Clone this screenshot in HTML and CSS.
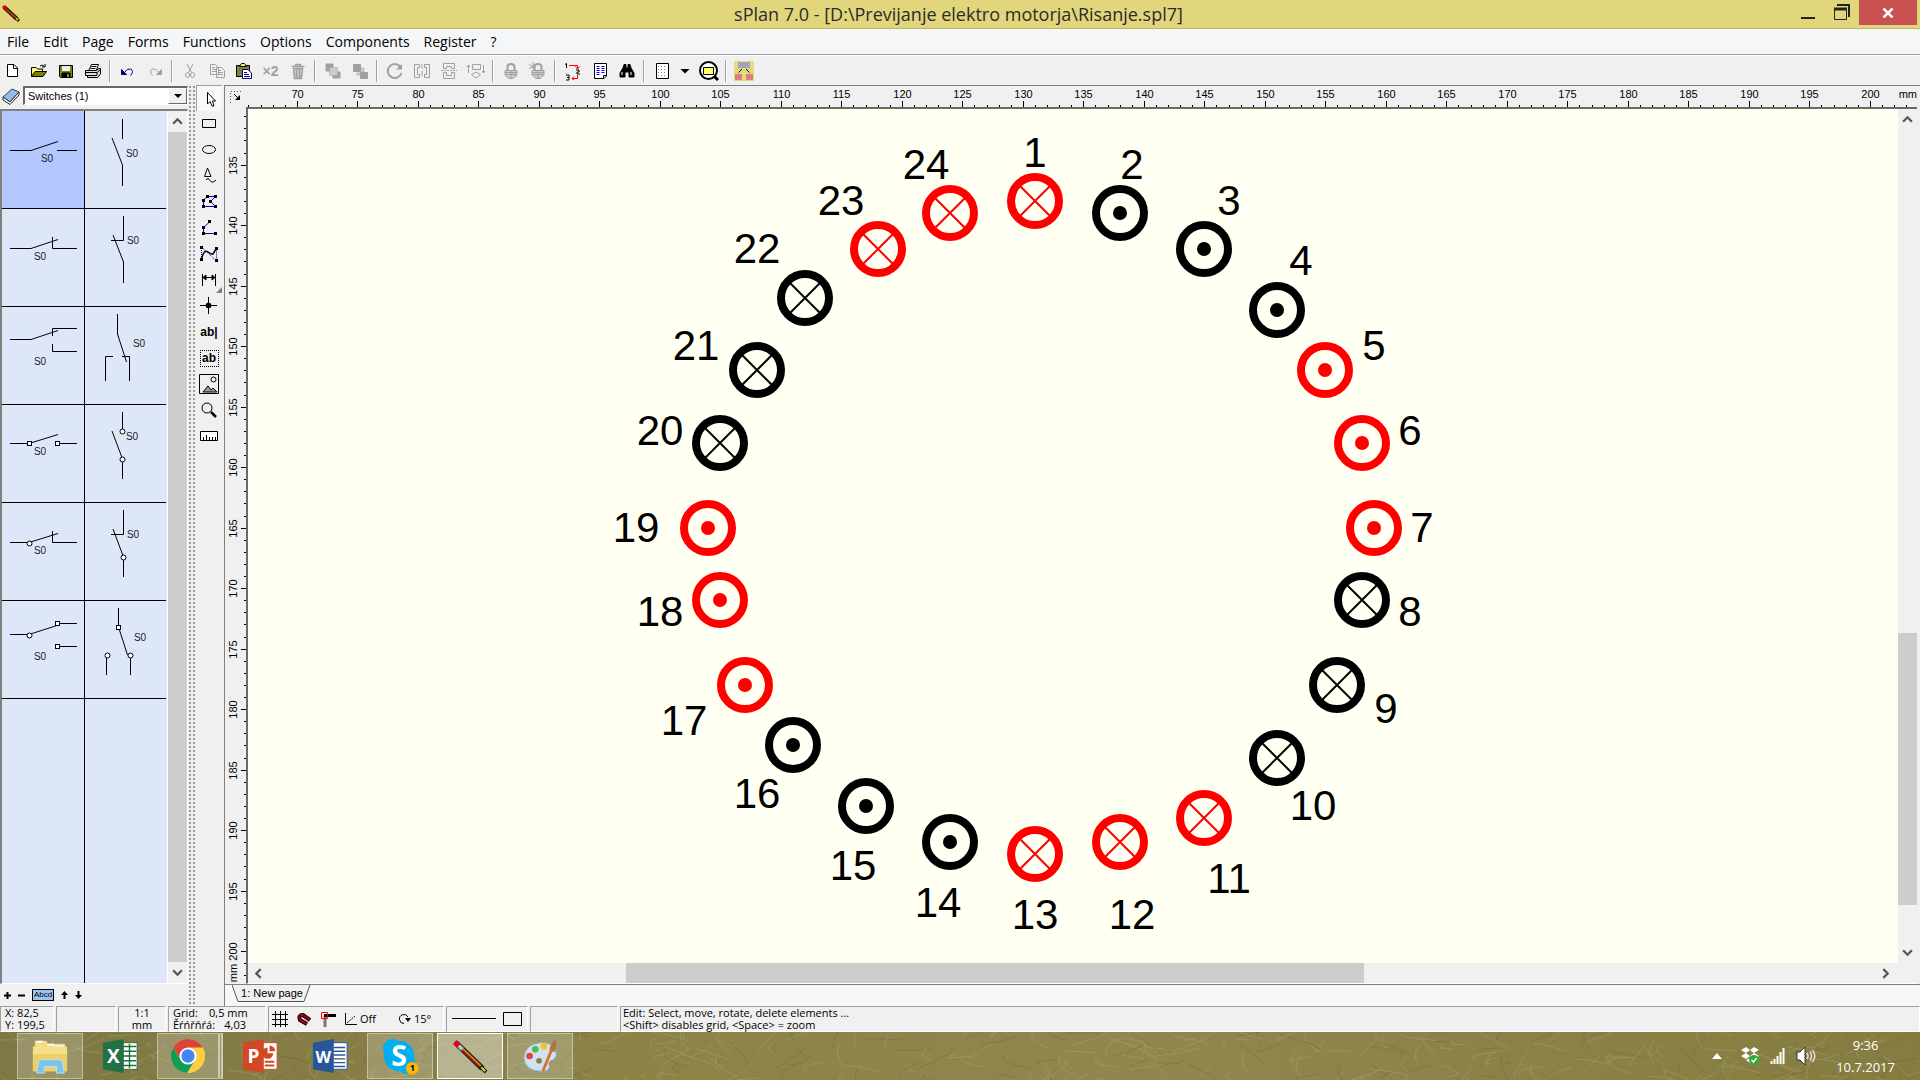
FILE: index.html
```html
<!DOCTYPE html>
<html lang="en">
<head>
    <meta charset="UTF-8">
    <meta name="viewport" content="width=device-width, initial-scale=1.0">
    <link rel="stylesheet" href="styles.css">
    <title>sPlan 7.0</title>
</head>
<body>
    <header class="titlebar">
        <svg class="app-icon" width="20" height="20" viewBox="0 0 20 20"><path d="M2 3L15 15" stroke="#200" stroke-width="4"/><path d="M4 5L14 14" stroke="#a8430c" stroke-width="2"/><path d="M1 2l3 3" stroke="#e00" stroke-width="3"/><path d="M14 14l3 3" stroke="#220" stroke-width="3"/><path d="M14 14l2 2" stroke="#dd0" stroke-width="1.500"/></svg>
        <h1>sPlan 7.0 - [D:\Previjanje elektro motorja\Risanje.spl7]</h1>
        <div class="window-buttons">
            <button class="win-btn" aria-label="Minimize"><svg width="16" height="16"><path d="M1 14H15" stroke="#222" stroke-width="2"/></svg></button>
            <button class="win-btn" aria-label="Restore"><svg width="16" height="16" fill="none" stroke="#222"><path d="M3 1H15V13" stroke-width="2"/><path d="M.5 4V15.500H12.500V4" /><path d="M0 5H13" stroke-width="3"/></svg></button>
            <button class="win-btn close" aria-label="Close"><svg width="12" height="10"><path d="M1.500 .5L10.500 9.500M10.500 .5L1.500 9.500" stroke="#fff" stroke-width="2.500"/></svg></button>
        </div>
    </header>

    <nav class="menubar">
        <a href="#">File</a><a href="#">Edit</a><a href="#">Page</a><a href="#">Forms</a><a href="#">Functions</a><a href="#">Options</a><a href="#">Components</a><a href="#">Register</a><a href="#">?</a>
    </nav>

    <div class="toolbar">
        <button aria-label="New"><svg viewBox="0 0 20 20"><path d="M5.500 3.500H12L15.500 7V15.500H5.500Z" fill="#fff"/><path d="M11.500 3.500V7.500H15.500"/></svg></button>
        <button aria-label="Open"><svg viewBox="0 0 20 20"><path d="M2.500 15.500V6.500H7L8.500 8H13.500V10.500" fill="#ffff70"/><path d="M2.500 15.500L6 10.500H17.500L14 15.500Z" fill="#808000"/><path d="M11 5Q13 3 15.500 5.500M16 3V6H13"/></svg></button>
        <button aria-label="Save"><svg viewBox="0 0 20 20"><path d="M3.500 4.500H16.500V16.500H4.500L3.500 15.500Z" fill="#808000"/><rect x="6" y="5" width="8" height="5" fill="#eee" stroke="none"/><path d="M6 12H14V16H6Z" fill="#000"/><path d="M12 13V16" stroke="#fff"/></svg></button>
        <button aria-label="Print"><svg viewBox="0 0 20 20"><path d="M6 9L8.500 3.500H15.500L13.500 9" fill="#fff"/><path d="M8.500 5.500H13.500M7.500 7.500H12.500"/><path d="M2.500 9.500H13L16 7.500H17.500V13L14.500 16.500H4.500V14.500H2.500Z" fill="#ddd"/><path d="M2.500 11.500H14V14.500H3M14 11.500L17.500 8.500M6 16.500H13" /></svg></button>
        <hr>
        <button aria-label="Undo"><svg class="navy" viewBox="0 0 20 20"><path d="M6 12Q9 7 12.500 8Q16.500 10 12.500 14.500"/><path d="M3.500 8.500V13.500H8.500Z" fill="#000080"/></svg></button>
        <button aria-label="Redo"><svg class="off" viewBox="0 0 20 20"><path d="M14 12Q11 7 7.500 8Q3.500 10 7.500 14.500"/><path d="M16.500 8.500V13.500H11.500Z" fill="#a0a0a0"/></svg></button>
        <hr>
        <button aria-label="Cut"><svg class="off" viewBox="0 0 20 20"><path d="M7 3L11.500 11.500M13 3L8.500 11.500"/><ellipse cx="7.500" cy="14" rx="2" ry="2.500"/><ellipse cx="12.500" cy="14" rx="2" ry="2.500"/></svg></button>
        <button aria-label="Copy"><svg class="off" viewBox="0 0 20 20"><path d="M3.500 3.500H8.500L11.500 6.500V13.500H3.500ZM9.500 6.500H14.500L17.500 9.500V16.500H9.500Z" fill="#f0f0f0"/><path d="M5 6.500H8M5 8.500H9M5 10.500H9M11 9.500H14M11 11.500H16M11 13.500H16"/></svg></button>
        <button aria-label="Paste"><svg viewBox="0 0 20 20"><path d="M2.500 4.500H15.500V15.500H2.500Z" fill="#808040"/><path d="M5.500 5.500L7.500 2.500H10.500L12.500 5.500Z" fill="#ffff70"/><path d="M8.500 8.500H14L17.500 12V17.500H8.500Z" fill="#fff" stroke="#000080"/><path d="M10 11.500H13M10 13.500H15M10 15.500H16" stroke="#000080"/></svg></button>
        <button class="times">×2</button>
        <button aria-label="Delete"><svg class="off" viewBox="0 0 20 20"><path d="M3.500 5.500H16.500M7.500 5V3.500H12.500V5M5.500 7.500H14.500L13.500 17.500H6.500Z" fill="#ddd" stroke-width="1.500"/><path d="M8.500 8V17M11.500 8V17" stroke-width="2"/></svg></button>
        <hr>
        <button aria-label="To front"><svg class="off" viewBox="0 0 20 20"><path d="M3 3h7v7h-7zM10 11h7v6h-7z" fill="#a0a0a0"/><path d="M6.500 6.500h8v8h-8z" fill="#ccc" stroke-dasharray="1"/></svg></button>
        <button aria-label="To back"><svg class="off" viewBox="0 0 20 20"><path d="M7 7h7v7h-7z" fill="#ccc" stroke-dasharray="1"/><path d="M3.500 3.500h7v7h-7zM10.500 11.500h7v6h-7z" fill="#a0a0a0"/></svg></button>
        <hr>
        <button aria-label="Rotate"><svg class="off" viewBox="0 0 20 20"><path d="M15.500 6A7 7 0 1 0 16.500 12" stroke-width="2"/><path d="M17 3V8.500H11Z" fill="#a0a0a0" stroke="none"/></svg></button>
        <button aria-label="Mirror horizontally"><svg class="off" viewBox="0 0 20 20"><path d="M10 3V17" stroke-dasharray="5 2"/><path d="M2.500 3.500H7.500V6.500H5.500V13.500H7.500V16.500H2.500ZM17.500 3.500H12.500V6.500H14.500V13.500H12.500V16.500H17.500Z"/></svg></button>
        <button aria-label="Mirror vertically"><svg class="off" viewBox="0 0 20 20"><path d="M2 9.500H18" stroke-dasharray="2 1"/><path d="M4.500 7.500V2.500H15.500V7.500H12.500V5.500H7.500V7.500ZM4.500 11.500V17.500H15.500V11.500H12.500V14.500H7.500V11.500Z"/></svg></button>
        <button aria-label="Flip"><svg class="off" viewBox="0 0 20 20"><path d="M6.500 3.500H14.500V8.500H6.500ZM2.500 12V4M1 6L2.500 4L4 6M17.500 4V12M16 10L17.500 12L19 10M5.500 13.500L10 11L14.500 13.500L10 17Z"/></svg></button>
        <hr>
        <button aria-label="Lock"><svg class="off" viewBox="0 0 20 20"><path d="M6.500 9V6Q6.500 3 10 3T13.500 6V9" stroke-width="2"/><path d="M4 9.500H16V14L12 17.500H8L4 14Z" fill="#ccc"/><path d="M4 11.500H16M5 13.500H15M10 10V17"/></svg></button>
        <button aria-label="Unlock"><svg class="off" viewBox="0 0 20 20"><path d="M6.500 9V6Q6.500 3 10 3T13.500 6V9" stroke-width="2"/><path d="M4 9.500H16V14L12 17.500H8L4 14Z" fill="#ccc"/><path d="M4 11.500H16M5 13.500H15M10 10V17M1 3L8 9M1 8L8 3M5 1V8"/></svg></button>
        <hr>
        <button aria-label="Renumber"><svg viewBox="0 0 20 20"><path d="M6 4.500H14.500V7M14.500 14V17.500H9M12.500 5.500L14.500 8L16.500 5.500M11 15.500L9 17.500L11 19" stroke="#f00"/><path d="M2 3.500L3.500 2.500V7M13 9H16V11H14V13H17M3 14H6V19H3M4 16.500H6"/></svg></button>
        <button aria-label="Part list"><svg viewBox="0 0 20 20"><path d="M4.500 2.500H16.500V15L14 17.500H4.500Z" fill="#fff"/><path d="M13.500 17.500V14.500H16.500"/><path d="M6.500 5.500H9.500M6.500 7.500H9.500M6.500 9.500H9.500M6.500 11.500H9.500M6.500 13.500H9.500M11.500 5.500H14.500M11.500 7.500H14.500M11.500 9.500H14.500M11.500 11.500H14.500" stroke="#00f"/></svg></button>
        <button aria-label="Search"><svg viewBox="0 0 20 20"><path d="M7 3.500H9V7H11V3.500H13L14 7L17 12V16H12V11H8V16H3V12L6 7Z" fill="#000"/><path d="M5 11V14M14 11V14" stroke="#fff"/></svg></button>
        <hr>
        <button aria-label="Grid"><svg viewBox="0 0 20 20"><path d="M4.500 2.500H16.500V17.500H4.500Z" fill="#fff"/><path d="M6 5.500H15M6 8.500H15M6 11.500H15M6 14.500H15" stroke="#888" stroke-dasharray="1 2"/></svg></button>
        <button class="narrow" aria-label="Grid options"><svg viewBox="0 0 20 20"><path d="M5.500 8H14.500L10 12.500Z" fill="#000" stroke="none"/></svg></button>
        <button aria-label="Zoom to page"><svg viewBox="0 0 20 20"><circle cx="9.500" cy="9.500" r="8.500" fill="#fff" stroke-width="2"/><path d="M4.500 6.500H14.500V13.500H4.500Z" fill="#ffff60"/><path d="M15 15L19 19" stroke-width="3"/></svg></button>
        <hr>
        <button aria-label="Page tree"><svg viewBox="0 0 20 20"><path d="M0 0H20V20H0Z" fill="#e1dc7c" stroke="none"/><path d="M4 1H16V7H4Z" fill="#a3a2bf" stroke="none"/><path d="M1 13H8V19H1ZM12 13H19V19H12Z" fill="#df8080" stroke="none"/><path d="M8 8L4.500 11.500M12 8L15.500 11.500"/></svg></button>
    </div>

    <main class="workspace">
        <aside class="library">
            <div class="library-head">
                <svg width="18" height="18" viewBox="0 0 18 18"><path d="M1 10L10 2L17 5L8 15Z" fill="#91bce8" stroke="#345"/><path d="M1 10L8 15L17 5V8L8 17.500L1 13Z" fill="#fff" stroke="#222"/></svg>
                <label class="hidden-label" for="group">Library group</label>
                <select id="group"><option>Switches (1)</option></select>
                <span class="drop"></span>
            </div>
            <div class="library-body">
                <div class="parts" id="parts"></div>
                <div class="scroll vertical">
                    <svg class="arrow" viewBox="0 0 10 10"><path d="M1 7L5 3L9 7"/></svg>
                    <div class="thumb full"></div>
                    <svg class="arrow" viewBox="0 0 10 10"><path d="M1 3L5 7L9 3"/></svg>
                </div>
            </div>
            <div class="library-foot">
                <button aria-label="Add"><svg width="7" height="7"><path d="M3.500 0V7M0 3.500H7" stroke-width="2"/></svg></button>
                <button aria-label="Remove"><svg width="7" height="7"><path d="M0 3.500H7" stroke-width="2"/></svg></button>
                <button class="names">Abcd</button>
                <button aria-label="Up"><svg width="7" height="8"><path d="M3.500 3V8" stroke-width="2"/><path d="M0 4L3.500 0L7 4Z" fill="#000" stroke="none"/></svg></button>
                <button aria-label="Down"><svg width="7" height="8"><path d="M3.500 0V5" stroke-width="2"/><path d="M0 4L3.500 8L7 4Z" fill="#000" stroke="none"/></svg></button>
            </div>
        </aside>
        <div class="splitter"></div>
        <div class="tools">
            <button class="active" aria-label="Select"><svg viewBox="0 0 20 20"><path d="M7.500 3.500V15L10 12.500L12 17H14L12.500 12H15.500Z" fill="#fff"/></svg></button>
            <button aria-label="Rectangle"><svg viewBox="0 0 20 20"><path d="M3.500 5.500H16.500V13.500H3.500Z"/></svg></button>
            <button aria-label="Ellipse"><svg viewBox="0 0 20 20"><ellipse cx="10" cy="9.500" rx="6.500" ry="4"/></svg></button>
            <button aria-label="Special form"><svg viewBox="0 0 20 20"><path d="M5.500 10.500L8.500 2L12 10.500ZM7 14Q9 11 11 14.500T17 14"/></svg></button>
            <button aria-label="Polygon"><svg viewBox="0 0 20 20"><path d="M4.500 14.500V8L8.500 4.500H16.500L11.500 9.500L16.500 14.500Z" stroke="#00c"/><path d="M3 13h3v3h-3zM3 7h3v3h-3zM7 3h3v3h-3zM15 3h3v3h-3zM10 8h3v3h-3zM15 13h3v3h-3z" fill="#000" stroke="none"/></svg></button>
            <button aria-label="Line"><svg viewBox="0 0 20 20"><path d="M10.500 4L4.500 9.500V15.500H16.500" stroke="#00c"/><path d="M9 2h3v3h-3zM3 8h3v3h-3zM3 14h3v3h-3zM15 14h3v3h-3z" fill="#000" stroke="none"/></svg></button>
            <button aria-label="Bezier"><svg viewBox="0 0 20 20"><path d="M2.500 15V3L17.500 17V5" stroke="#00c" stroke-dasharray="1 1"/><path d="M2.500 15Q5 5 9 8T14 10L17 5" stroke-width="1.500"/><path d="M1 2h3v3h-3zM1 14h3v3h-3zM16 3h3v3h-3zM16 15h3v3h-3z" fill="#000" stroke="none"/></svg></button>
            <button aria-label="Dimension"><svg viewBox="0 0 20 20"><path d="M3.500 4V16M16.500 4V16M4 7.500H16"/><path d="M4 7.500L7 5V10ZM16 7.500L13 5V10Z" fill="#000"/></svg><i class="corner"></i></button>
            <button aria-label="Node"><svg viewBox="0 0 20 20"><path d="M9.500 1V18M1 9.500H18"/><circle cx="9.500" cy="9.500" r="2.500" fill="#000"/></svg></button>
            <button class="ab">ab|</button>
            <button class="ab"><span>ab</span></button>
            <button aria-label="Image"><svg viewBox="0 0 20 20"><path d="M.5 .5H19.500V19.500H.5Z"/><circle cx="14.500" cy="5.500" r="2.500"/><path d="M4 18L9 12L12 16L14 14L18 18Z" fill="#999"/></svg></button>
            <button aria-label="Zoom"><svg viewBox="0 0 20 20"><circle cx="8" cy="8" r="5" fill="#eee"/><path d="M12 12L17 17" stroke-width="2.500"/></svg></button>
            <button aria-label="Measure"><svg viewBox="0 0 20 20"><path d="M1.500 5.500H18.500V14.500H1.500Z" fill="#fff"/><path d="M4.500 11V14M7.500 9V14M10.500 11V14M13.500 11V14M16.500 11V14"/></svg></button>
        </div>
        <section class="drawing">
            <div class="sheet">
                <div class="origin"><svg width="14" height="14"><path d="M.5 12V.5H13" fill="none" stroke="#555" stroke-dasharray="1 2"/><path d="M4 3L9 8" stroke="#000"/><path d="M10 4V9H5Z" /></svg></div>
                <svg class="ruler-x" id="rulerX"></svg>
                <svg class="ruler-y" id="rulerY"></svg>
                <div class="view">
                    <svg class="canvas" id="canvas"></svg>
                    <div class="scroll vertical">
                        <svg class="arrow" viewBox="0 0 10 10"><path d="M1 7L5 3L9 7"/></svg>
                        <div class="track"><div class="space-v"></div><div class="thumb page-v"></div></div>
                        <svg class="arrow" viewBox="0 0 10 10"><path d="M1 3L5 7L9 3"/></svg>
                    </div>
                    <div class="scroll horizontal">
                        <svg class="arrow" viewBox="0 0 10 10"><path d="M7 1L3 5L7 9"/></svg>
                        <div class="track"><div class="thumb page-h"></div></div>
                        <svg class="arrow" viewBox="0 0 10 10"><path d="M3 1L7 5L3 9"/></svg>
                    </div>
                </div>
            </div>
            <div class="page-tabs">
                <button>
                    <svg width="80" height="18"><path d="M0 0L6 16.500H72L78 0" fill="#f0f0f0" stroke="#555"/></svg>
                    <span>1: New page</span>
                </button>
            </div>
        </section>
    </main>

    <footer class="statusbar">
        <div class="pane position">X: 82,5<br>Y: 199,5</div>
        <div class="pane size"></div>
        <div class="pane scale">1:1<br>mm</div>
        <div class="pane grid-info"><span>Grid:</span><span>0,5 mm</span><span>Ěŕńřňŕá:</span><span>4,03</span></div>
        <div class="pane snaps">
            <button aria-label="Snap to grid"><svg width="16" height="16"><path d="M3.500 0V16M8.500 0V16M13.500 0V16M0 3.500H16M0 8.500H16M0 13.500H16"/></svg></button>
            <button aria-label="Magnet"><svg width="16" height="16"><path d="M11 13L4 9Q2 4 7 4L14 9" stroke="#200" stroke-width="4"/><path d="M11 13L4 9Q2 4 7 4L14 9" stroke="#a00018" stroke-width="2"/></svg></button>
            <button aria-label="Rubber band"><svg width="16" height="16"><path d="M5 5V16" stroke="#777" stroke-width="3"/><path d="M4 4.500H16" stroke-width="3"/><path d="M1.500 1.500H7.500V7.500H1.500Z" stroke="#f00"/></svg></button>
            <button class="wide"><svg width="14" height="14"><path d="M1.500 1V12.500H13"/><path d="M3 11L11 4" stroke-dasharray="2 1"/></svg>Off</button>
            <button class="wide"><svg width="14" height="14"><path d="M6 11.500A4.500 4.500 0 1 1 10 5"/><path d="M7 6H13L10 10Z" fill="#000" stroke="none"/></svg>15°</button>
        </div>
        <div class="pane style"><svg width="72" height="18"><path d="M1 8.500H45M52.500 2.500H70.500V15.500H52.500Z"/></svg></div>
        <div class="pane blank"></div>
        <div class="pane hint">Edit: Select, move, rotate, delete elements ...<br>&lt;Shift&gt; disables grid, &lt;Space&gt; = zoom</div>
    </footer>

    <div class="taskbar">
        <svg class="grass" id="grass" preserveAspectRatio="none"></svg>
        <button class="task open" aria-label="File Explorer"><svg viewBox="0 0 40 40"><path d="M4 4H16L18 7H36V14H4Z" fill="#f3dc84"/><path d="M6 5H12M17 8H24M24 10H34" stroke="#fff" stroke-width="2"/><path d="M2 10H38V36H2Z" fill="#f5e08a"/><path d="M2 18H38V36H2Z" fill="#eccf66"/><path d="M6 38L8 26Q9 24 11 24H30Q32 24 33 26L35 38H27V31H14V38Z" fill="#78c4ea" stroke="#b9e4f7"/></svg></button>
        <button class="task" aria-label="Excel"><svg viewBox="0 0 40 40"><path d="M22 6H38V34H22Z" fill="#fff" stroke="#207245"/><path d="M23 10H37M23 15H37M23 20H37M23 25H37M23 30H37M30 7V33" stroke="#207245" stroke-width="1.500"/><path d="M2 6L24 2V38L2 34Z" fill="#207245"/><text x="13" y="27" class="office">X</text></svg></button>
        <button class="task open stacked" aria-label="Chrome"><svg viewBox="0 0 40 40"><circle cx="20" cy="20" r="18" fill="#ffcd40"/><path d="M4.400 11A18 18 0 0 1 35.600 11H20L12 24Z" fill="#db4437"/><path d="M4.400 11A18 18 0 0 0 19 38L27.500 24L12 24Z" fill="#0f9d58"/><circle cx="20" cy="20" r="9" fill="#fff"/><circle cx="20" cy="20" r="7" fill="#4285f4"/></svg></button>
        <button class="task" aria-label="PowerPoint"><svg viewBox="0 0 40 40"><path d="M22 6H38V34H22Z" fill="#fff" stroke="#d24726"/><path d="M25 26H35M25 30H35" stroke="#d24726" stroke-width="2"/><path d="M28 11A6 6 0 1 0 34 17H28Z" fill="#d24726"/><path d="M30 9A6 6 0 0 1 36 15H30Z" fill="#d24726"/><path d="M2 6L24 2V38L2 34Z" fill="#d24726"/><text x="13" y="27" class="office">P</text></svg></button>
        <button class="task" aria-label="Word"><svg viewBox="0 0 40 40"><path d="M22 6H38V34H22Z" fill="#fff" stroke="#2a5699"/><path d="M24 11H36M24 15H36M24 19H36M24 23H36M24 27H36M24 31H36" stroke="#2a5699" stroke-width="1.500"/><path d="M2 6L24 2V38L2 34Z" fill="#2a5699"/><text x="13" y="27" class="office small">W</text></svg></button>
        <button class="task open" aria-label="Skype"><svg viewBox="0 0 40 40"><circle cx="19" cy="20" r="16" fill="#00aff0"/><circle cx="12" cy="12" r="10" fill="#00aff0"/><circle cx="27" cy="29" r="10" fill="#00aff0"/><text x="19" y="31" class="skype">S</text><circle cx="33" cy="33" r="6.500" fill="#fdb813" stroke="#f5a000"/><text x="33" y="36" class="badge">1</text></svg></button>
        <button class="task open current" aria-label="sPlan"><svg viewBox="0 0 40 40"><path d="M5 6L33 33" stroke="#222" stroke-width="6"/><path d="M9 10L31 31" stroke="#8d2208" stroke-width="4"/><path d="M10 10L32 31" stroke="#e0901c" stroke-width="1.500"/><path d="M8 9L12 13" stroke="#bbb" stroke-width="4"/><path d="M4 5L8 9" stroke="#e8001c" stroke-width="5"/><path d="M31 31L37 37" stroke="#222" stroke-width="4"/><path d="M32 32L36 36" stroke="#e8e020" stroke-width="2"/></svg></button>
        <button class="task open" aria-label="Paint"><svg viewBox="0 0 40 40"><path d="M3 22Q4 8 20 6Q35 5 37 17Q38 23 31 25Q28 27 30 31Q29 37 20 36Q4 35 3 22Z" fill="#cfe2f1" stroke="#8aaac4"/><circle cx="9" cy="20" r="3.500" fill="#e84040"/><circle cx="15" cy="13" r="3.500" fill="#55b848"/><circle cx="24" cy="10" r="3.500" fill="#f9c020"/><circle cx="19" cy="25" r="3" fill="#8a8146"/><path d="M23 36L32 14" stroke="#d2762a" stroke-width="3"/><path d="M30 14Q30 7 37 2Q38 10 35 16Z" fill="#b27542"/></svg></button>
        <div class="tray">
            <svg width="10" height="6"><path d="M0 6L5 0L10 6Z" fill="#fff"/></svg>
            <svg class="dropbox" width="20" height="20"><path d="M6 1L10 4L6 7L1 4ZM14 1L19 4L14 7L10 4ZM6 7L10 10L6 13L1 10ZM14 7L19 10L14 13L10 10ZM6 14L10 12L14 14L10 17Z" fill="#fff"/><circle cx="14" cy="14" r="5" fill="#2bab3a"/><path d="M11.500 14L13.500 16L16.500 12" fill="none" stroke="#fff" stroke-width="1.500"/></svg>
            <svg class="signal" width="16" height="18"><path d="M1.500 14V17M4.500 12V17M7.500 9V17M10.500 5V17M13.500 1V17" stroke="#fff" stroke-width="2"/></svg>
            <svg class="sound" width="20" height="20"><path d="M1 6H4L9 1V19L4 14H1Z" fill="#fff" stroke="#333"/><path d="M11 7Q13 10 11 13M14 5.500Q17 10 14 14.500M16.500 4Q21 10 16.500 16" fill="none" stroke="#ddd" stroke-width="1.500"/></svg>
            <div class="clock">9:36<br>10.7.2017</div>
        </div>
    </div>

    <script>
        const MM = 12.1;          // pixels per millimetre at the current zoom
        const LEFT = 65.96;       // millimetre shown at the left edge of the canvas
        const TOP = 130.4;        // millimetre shown at the top edge

        // slot number, type (x = into page, o = out of page), colour, centre, label centre
        const slots = [
            [1, 'x', 'red', 131, 138, 131, 134],
            [2, 'o', 'black', 138, 139, 139, 135],
            [3, 'o', 'black', 145, 142, 147, 138],
            [4, 'o', 'black', 151, 147, 153, 143],
            [5, 'o', 'red', 155, 152, 159, 150],
            [6, 'o', 'red', 158, 158, 162, 157],
            [7, 'o', 'red', 159, 165, 163, 165],
            [8, 'x', 'black', 158, 171, 162, 172],
            [9, 'x', 'black', 156, 178, 160, 180],
            [10, 'x', 'black', 151, 184, 154, 188],
            [11, 'x', 'red', 145, 189, 147, 194],
            [12, 'x', 'red', 138, 191, 139, 197],
            [13, 'x', 'red', 131, 192, 131, 197],
            [14, 'o', 'black', 124, 191, 123, 196],
            [15, 'o', 'black', 117, 188, 116, 193],
            [16, 'o', 'black', 111, 183, 108, 187],
            [17, 'o', 'red', 107, 178, 102, 181],
            [18, 'o', 'red', 105, 171, 100, 172],
            [19, 'o', 'red', 104, 165, 98, 165],
            [20, 'x', 'black', 105, 158, 100, 157],
            [21, 'x', 'black', 108, 152, 103, 150],
            [22, 'x', 'black', 112, 146, 108, 142],
            [23, 'x', 'red', 118, 142, 115, 138],
            [24, 'x', 'red', 124, 139, 122, 135]
        ];

        const px = mm => Math.round((mm - LEFT) * MM);
        const py = mm => Math.round((mm - TOP) * MM);

        document.getElementById('canvas').innerHTML = slots.map(([n, type, color, x, y, lx, ly]) => {
            const cx = px(x), cy = py(y);
            const mark = type === 'o'
                ? `<circle class="dot" cx="${cx}" cy="${cy}" r="7"/>`
                : `<path class="cross" d="M${cx - 15} ${cy - 15}l30 30m0 -30l-30 30"/>`;
            return `<g class="slot ${color}"><circle class="ring" cx="${cx}" cy="${cy}" r="24"/>${mark}</g>
                <text x="${px(lx)}" y="${py(ly) + 14}">${n}</text>`;
        }).join('');

        let ticks = '';
        for (let mm = 66; mm < 205; mm++) {
            const x = px(mm) + 2.5;
            const big = mm % 5 === 0;
            if (mm <= 203) ticks += `<path d="M${x} 21V${big ? 15 : 19}"/>`;
            if (big && mm >= 70 && mm <= 200) ticks += `<text x="${x}" y="12">${mm}</text>`;
        }
        document.getElementById('rulerX').innerHTML = ticks + '<text class="unit" x="100%" dx="-3" y="12">mm</text>';

        ticks = '';
        for (let mm = 131; mm < 203; mm++) {
            const y = py(mm) + 2.5;
            const big = mm % 5 === 0;
            ticks += `<path d="M22 ${y}H${big ? 16 : 19}"/>`;
            if (big && mm >= 135) ticks += `<text transform="translate(12 ${y}) rotate(-90)">${mm}</text>`;
        }
        ticks += `<text transform="translate(12 ${py(201.8) + 2}) rotate(-90)">mm</text>`;
        document.getElementById('rulerY').innerHTML = ticks;

        // library parts: line path, squares, circles, label position
        const parts = [
            ['M8 39.5H29L56 30.5M55 39.5H75', [], [], 45, 51],
            ['M37.5 8V28M27 27L37.5 54V75', [], [], 47, 46],
            ['M8 39.5H29L56 30.5M50.5 28V39.5H75', [], [], 38, 51],
            ['M38.5 7V31.5H26M28 26L38.5 53V74', [], [], 48, 35],
            ['M8 32.5H29L56 23.5M75 21.5H50.5V29M50.5 37V44.5H75', [], [], 38, 58],
            ['M32.5 7V27L41.5 55M28 49.5H20.5V74M37 49.5H44.5V74', [], [], 54, 40],
            ['M8 38.5H27L56 29.5M56 38.5H75', [[27, 38], [55, 38]], [], 38, 50],
            ['M37.5 7V26M27 26L37.5 54V74', [], [[37, 26], [37, 54]], 47, 35],
            ['M8 39.5H27L56 30.5M50.5 28V39.5H75', [], [[27, 40]], 38, 51],
            ['M38.5 7V31.5H26M28 26L38.5 54V74', [], [[38, 54]], 48, 35],
            ['M8 33.5H27L55 24.5M55 22.5H75M55 45.5H75', [[55, 22], [55, 45]], [[27, 34]], 38, 59],
            ['M33.5 7V26L42.5 54M21.5 54V74M45.5 54V74', [[33, 26]], [[22, 54], [45, 54]], 55, 40]
        ];
        document.getElementById('parts').innerHTML = parts.map(([d, squares, circles, x, y], i) => `
            <button class="part${i === 0 ? ' selected' : ''}">
                <svg width="81" height="97"><path d="${d}"/>
                ${squares.map(([a, b]) => `<rect x="${a - 1.5}" y="${b - 1.5}" width="4" height="4"/>`).join('')}
                ${circles.map(([a, b]) => `<circle cx="${a + 0.5}" cy="${b + 0.5}" r="2.500"/>`).join('')}
                <text x="${x}" y="${y}">S0</text></svg>
            </button>`).join('') + '<div class="part rest"></div><div class="part rest"></div>';

        // dry grass behind the taskbar
        let seed = 7;
        const rnd = n => (seed = (seed * 16807) % 2147483647) % n;
        let grass = '';
        for (let i = 0; i < 420; i++) {
            const x = rnd(1920), y = rnd(60), dx = rnd(70) - 35, dy = rnd(50) - 25;
            grass += `<path d="M${x} ${y}q${dx} ${dy / 2 | 0} ${dx + 10} ${dy}" stroke="${i % 3 ? '#b3ab74' : '#6f6832'}"/>`;
        }
        document.getElementById('grass').setAttribute('viewBox', '0 0 1920 48');
        document.getElementById('grass').innerHTML = grass;
    </script>
</body>
</html>
```
FILE: styles.css
```css
* {
    box-sizing: border-box;
}

body {
    margin: 0;
    height: 100vh;
    display: flex;
    flex-direction: column;
    overflow: hidden;
    background-color: #f0f0f0;
    color: #000;
    font-family: "Open Sans", sans-serif;
    font-size: 12px;
}

button {
    margin: 0;
    padding: 0;
    border: none;
    background: none;
    color: inherit;
    font: inherit;
}

svg {
    display: block;
    flex: none;
}

/* title */
.titlebar {
    display: flex;
    align-items: center;
    height: 29px;
    background-color: #e1d67b;
    border-bottom: 1px solid #c2b564;
}

.app-icon {
    margin-left: 2px;
}

.titlebar h1 {
    flex: 1;
    margin: 0;
    padding-left: 104px;
    color: #2b2b2b;
    text-align: center;
    font-size: 18px;
    font-weight: normal;
    line-height: 28px;
}

.window-buttons {
    display: flex;
    align-self: flex-start;
    margin-right: 3px;
}

.win-btn {
    display: flex;
    justify-content: center;
    width: 34px;
    height: 25px;
    padding-top: 4px;
}

.win-btn.close {
    align-items: center;
    width: 58px;
    padding: 0;
    background-color: #c75050;
}

/* menu */
.menubar {
    display: flex;
    height: 26px;
    background-color: #f5f6f8;
    border-bottom: 1px solid #a0a0a0;
}

.menubar a {
    padding: 0 7px;
    color: #000;
    font-size: 14px;
    line-height: 25px;
    text-decoration: none;
}

/* toolbar */
.toolbar {
    display: flex;
    align-items: center;
    height: 30px;
    margin-left: -2px;
    border-top: 1px solid #fff;
}

.toolbar button {
    display: flex;
    justify-content: center;
    width: 27px;
}

.toolbar .narrow {
    width: 20px;
}

.toolbar hr {
    width: 2px;
    height: 22px;
    margin: 0 3px;
    border: none;
    border-left: 1px solid #a0a0a0;
    border-right: 1px solid #fff;
}

.toolbar svg,
.tools svg {
    width: 20px;
    height: 20px;
    fill: none;
    stroke: #000;
}

.toolbar svg.off {
    stroke: #a0a0a0;
}

.toolbar svg.navy {
    stroke: #000080;
}

.toolbar .times {
    color: #a0a0a0;
    font-family: "Liberation Sans", sans-serif;
    font-size: 14px;
    font-weight: bold;
}

.workspace {
    display: flex;
    flex: 1;
    min-height: 0;
}

/* component library */
.library {
    display: flex;
    flex-direction: column;
    width: 188px;
}

.library-head {
    display: flex;
    position: relative;
    align-items: center;
    gap: 3px;
    height: 24px;
    padding: 0 0 3px 2px;
}

.hidden-label {
    position: absolute;
    opacity: 0;
    pointer-events: none;
}

.library-head select {
    flex: 1;
    height: 19px;
    padding: 0 3px;
    border: 1px solid #fff;
    border-top: 2px solid #696969;
    border-left: 2px solid #696969;
    border-radius: 0;
    background-color: #fff;
    color: #000;
    appearance: none;
    font-family: "Liberation Sans", sans-serif;
    font-size: 11px;
}

.drop {
    position: absolute;
    top: 3px;
    right: 1px;
    width: 19px;
    height: 16px;
    border: 1px solid #fff;
    border-right-color: #696969;
    border-bottom-color: #696969;
    background-color: #f0f0f0;
}

.drop::after {
    content: "";
    position: absolute;
    top: 5px;
    left: 5px;
    border: 4px solid transparent;
    border-top-color: #000;
    border-bottom: none;
}

.library-body {
    display: flex;
    flex: 1;
    min-height: 0;
    border: 2px solid #808080;
    border-right: 1px solid #fff;
    border-bottom: 1px solid #fff;
}

.parts {
    display: grid;
    grid-template-columns: 83px 81px;
    grid-auto-rows: 98px;
    flex: 1;
    overflow: hidden;
    background-color: #dee7f8;
    border-right: 1px solid #fff;
}

.part {
    border-bottom: 1px solid #000;
}

.part:nth-child(odd) {
    border-right: 1px solid #000;
}

.part.rest {
    height: 100vh;
}

.part.selected {
    background-color: #b5c7ff;
}

.part svg {
    fill: none;
    stroke: #000;
}

.part rect,
.part circle {
    fill: #fff;
}

.part text {
    fill: #222;
    stroke: none;
    font-family: "Liberation Sans", sans-serif;
    font-size: 10px;
    text-anchor: middle;
}

.library-foot {
    display: flex;
    align-items: center;
    gap: 7px;
    height: 22px;
    padding-left: 4px;
}

.library-foot svg,
.statusbar svg {
    fill: none;
    stroke: #000;
}

.library-foot .names {
    width: 22px;
    height: 12px;
    border: 1px solid #000;
    background-color: #9cc6f0;
    font-family: "Liberation Sans", sans-serif;
    font-size: 8px;
    line-height: 10px;
}

.splitter {
    width: 8px;
    background: radial-gradient(circle, #999 1px, transparent 1px) 0 0 / 4px 4px;
}

/* drawing tools */
.tools {
    width: 28px;
}

.tools button {
    display: flex;
    position: relative;
    align-items: center;
    justify-content: center;
    width: 26px;
    height: 26px;
}

.tools .active {
    background-color: #f8f8f8;
    border-top: 1px solid #a0a0a0;
    border-left: 1px solid #a0a0a0;
}

.tools .corner {
    position: absolute;
    right: 0;
    bottom: 0;
    border: 3px solid #808080;
    border-top-color: transparent;
    border-left-color: transparent;
}

.tools .ab {
    font-family: "Liberation Sans", sans-serif;
    font-size: 12px;
    font-weight: bold;
}

.ab span {
    width: 19px;
    border: 1px dotted #000;
    line-height: 15px;
}

/* sheet with rulers */
.drawing {
    display: flex;
    flex-direction: column;
    flex: 1;
    min-width: 0;
    border-left: 1px solid #808080;
}

.sheet {
    display: grid;
    grid-template-columns: 21px 1fr;
    grid-template-rows: 21px 1fr;
    flex: 1;
    min-height: 0;
    border-top: 1px solid #808080;
}

.origin {
    padding: 5px;
}

.ruler-x,
.ruler-y {
    width: 100%;
    height: 100%;
    overflow: hidden;
    fill: #000;
    stroke: #000;
    font-family: "Liberation Sans", sans-serif;
    font-size: 11px;
}

.ruler-x text,
.ruler-y text {
    stroke: none;
    text-anchor: middle;
}

.ruler-x .unit {
    text-anchor: end;
}

.view {
    display: grid;
    grid-template-columns: 1fr 19px;
    grid-template-rows: 1fr 20px;
    min-height: 0;
    margin-right: 3px;
    border-top: 2px solid #696969;
    border-left: 2px solid #696969;
    border-bottom: 1px solid #fff;
}

.canvas {
    width: 100%;
    height: 100%;
    overflow: hidden;
    background-color: #fffff2;
    font-family: "Liberation Sans", sans-serif;
    font-size: 42px;
    text-anchor: middle;
}

.ring {
    fill: none;
    stroke-width: 8;
}

.cross {
    stroke-width: 2;
}

.red {
    fill: #f00;
    stroke: #f00;
}

.black {
    fill: #000;
    stroke: #000;
}

.dot {
    stroke: none;
}

.scroll {
    display: flex;
    align-items: center;
}

.scroll.vertical {
    flex-direction: column;
    width: 19px;
}

.scroll.horizontal {
    padding-right: 2px;
}

.scroll .arrow {
    width: 11px;
    height: 11px;
    margin: 5px;
    fill: none;
    stroke: #555;
    stroke-width: 2;
}

.track {
    display: flex;
    flex: 1;
    align-self: stretch;
}

.vertical .track {
    flex-direction: column;
}

.thumb {
    background-color: #cdcdcd;
}

.thumb.full {
    flex: 1;
    align-self: stretch;
}

.space-v {
    height: 62%;
}

.page-v {
    height: 33.5%;
}

.page-h {
    width: 46%;
    margin-left: 22.2%;
}

.page-tabs {
    height: 22px;
    padding-left: 7px;
    border-top: 1px solid #808080;
    background-color: #f7f7f7;
}

.page-tabs button {
    display: grid;
    font-family: "Liberation Sans", sans-serif;
    font-size: 11px;
}

.page-tabs svg,
.page-tabs span {
    grid-area: 1 / 1;
}

.page-tabs span {
    line-height: 16px;
}

/* status */
.statusbar {
    display: flex;
    gap: 2px;
    height: 26px;
    font-size: 11px;
    line-height: 12px;
}

.pane {
    border-top: 1px solid #a0a0a0;
    border-left: 1px solid #a0a0a0;
    border-right: 1px solid #fff;
    border-bottom: 1px solid #fff;
    white-space: nowrap;
}

.position {
    width: 54px;
    padding-left: 4px;
}

.size {
    width: 60px;
}

.scale {
    width: 48px;
    text-align: center;
}

.grid-info {
    display: grid;
    grid-template-columns: 36px 37px;
    width: 98px;
    padding-left: 4px;
}

.grid-info span:nth-child(even) {
    text-align: right;
}

.snaps {
    display: flex;
    align-items: center;
    gap: 8px;
    width: 176px;
    padding-left: 3px;
}

.snaps .wide {
    display: flex;
    align-items: center;
    gap: 2px;
    margin-right: 14px;
}

.snaps .wide:last-child {
    margin-right: 0;
}

.style {
    width: 82px;
    padding: 3px 4px;
}

.blank {
    width: 88px;
}

.hint {
    flex: 1;
    padding-left: 2px;
}

/* taskbar */
.taskbar {
    display: flex;
    position: relative;
    align-items: center;
    gap: 4px;
    height: 48px;
    padding-left: 17px;
    background: linear-gradient(90deg, #7f7744, #8b8248 30%, #8f874d 60%, #857c42);
}

.grass {
    position: absolute;
    top: 0;
    left: 0;
    width: 100%;
    height: 100%;
    fill: none;
    opacity: 0.4;
}

.task {
    display: flex;
    position: relative;
    align-items: center;
    justify-content: center;
    width: 66px;
    height: 46px;
    border: 1px solid transparent;
}

.task svg {
    width: 38px;
    height: 38px;
    overflow: visible;
}

.task.open {
    border-color: rgba(255, 255, 255, 0.4);
    background-color: rgba(255, 255, 255, 0.2);
}

.task.stacked {
    border-right: 5px double rgba(255, 255, 255, 0.5);
}

.task.current {
    border-color: #fff;
    background-color: rgba(255, 255, 255, 0.4);
}

.office,
.skype,
.badge {
    fill: #fff;
    font-size: 20px;
    font-weight: bold;
    text-anchor: middle;
}

.office.small {
    font-size: 17px;
}

.skype {
    font-size: 30px;
}

.badge {
    fill: #000;
    font-size: 9px;
}

.tray {
    display: flex;
    position: relative;
    align-items: center;
    gap: 10px;
    margin-left: auto;
    padding-right: 25px;
    color: #fff;
}

.tray .dropbox {
    margin-left: 8px;
}

.clock {
    margin-left: 10px;
    font-size: 13px;
    line-height: 22px;
    text-align: center;
}
```
